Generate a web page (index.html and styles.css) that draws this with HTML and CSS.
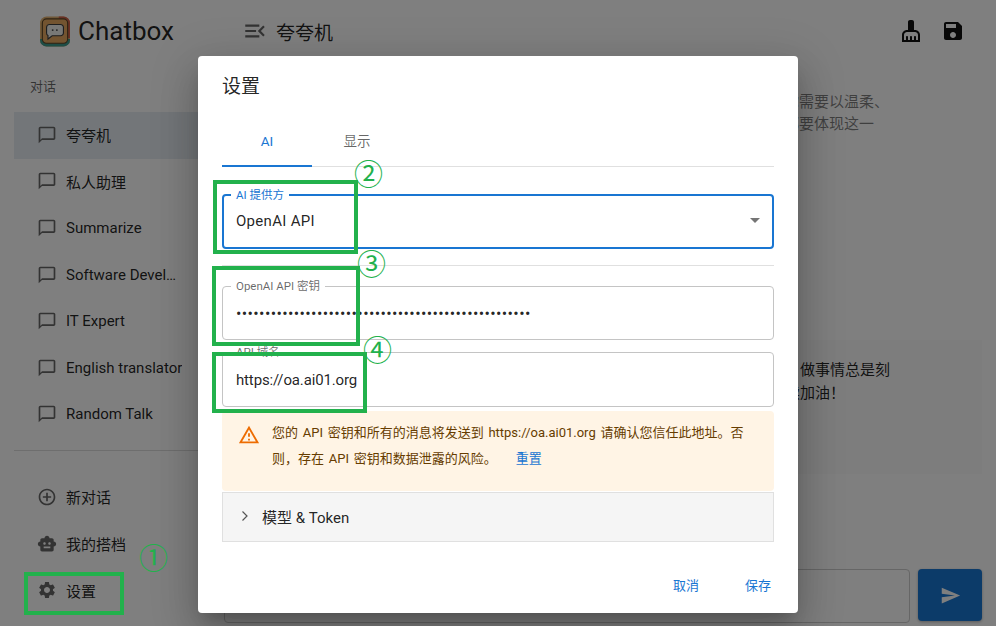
FILE: index.html
```html
<!DOCTYPE html>
<html lang="zh-CN">
  <head>
    <meta charset="UTF-8" />
    <meta name="viewport" content="width=device-width, initial-scale=1.0" />
    <title>Chatbox</title>
    <link rel="stylesheet" href="styles.css">
  </head>
  <body>
    <svg class="sprites" xmlns="http://www.w3.org/2000/svg">
      <symbol id="i-chat" viewBox="0 0 24 24"><path d="M20 2H4c-1.1 0-2 .9-2 2v18l4-4h14c1.1 0 2-.9 2-2V4c0-1.1-.9-2-2-2zm0 14H6l-2 2V4h16v12z"/></symbol>
      <symbol id="i-add" viewBox="0 0 24 24"><path d="M13 7h-2v4H7v2h4v4h2v-4h4v-2h-4V7zm-1-5C6.48 2 2 6.48 2 12s4.48 10 10 10 10-4.48 10-10S17.52 2 12 2zm0 18c-4.41 0-8-3.59-8-8s3.59-8 8-8 8 3.59 8 8-3.59 8-8 8z"/></symbol>
      <symbol id="i-bot" viewBox="0 0 24 24"><path d="M20 9V7c0-1.1-.9-2-2-2h-3c0-1.66-1.34-3-3-3S9 3.34 9 5H6c-1.1 0-2 .9-2 2v2c-1.66 0-3 1.34-3 3s1.34 3 3 3v4c0 1.1.9 2 2 2h12c1.1 0 2-.9 2-2v-4c1.66 0 3-1.34 3-3s-1.34-3-3-3zM7.5 11.5c0-.83.67-1.5 1.5-1.5s1.5.67 1.5 1.5S9.83 13 9 13s-1.5-.67-1.5-1.5zM16 17H8v-2h8v2zm-1-4c-.83 0-1.5-.67-1.5-1.5S14.17 10 15 10s1.5.67 1.5 1.5S15.83 13 15 13z"/></symbol>
      <symbol id="i-gear" viewBox="0 0 24 24"><path d="M19.14 12.94c.04-.3.06-.61.06-.94 0-.32-.02-.64-.07-.94l2.03-1.58c.18-.14.23-.41.12-.61l-1.92-3.32c-.12-.22-.37-.29-.59-.22l-2.39.96c-.5-.38-1.03-.7-1.62-.94l-.36-2.54c-.04-.24-.24-.41-.48-.41h-3.84c-.24 0-.43.17-.47.41l-.36 2.54c-.59.24-1.13.57-1.62.94l-2.39-.96c-.22-.08-.47 0-.59.22L2.74 8.87c-.12.21-.08.47.12.61l2.03 1.58c-.05.3-.09.63-.09.94s.02.64.07.94l-2.03 1.58c-.18.14-.23.41-.12.61l1.92 3.32c.12.22.37.29.59.22l2.39-.96c.5.38 1.03.7 1.62.94l.36 2.54c.05.24.24.41.48.41h3.84c.24 0 .44-.17.47-.41l.36-2.54c.59-.24 1.13-.56 1.62-.94l2.39.96c.22.08.47 0 .59-.22l1.92-3.32c.12-.22.07-.47-.12-.61l-2.01-1.58zM12 15.6c-1.98 0-3.6-1.62-3.6-3.6s1.62-3.6 3.6-3.6 3.6 1.62 3.6 3.6-1.62 3.6-3.6 3.6z"/></symbol>
    </svg>

    <div class="app">
      <aside class="sidebar">
        <div class="brand">
          <svg class="logo" viewBox="0 0 32 32">
            <rect width="32" height="32" rx="7" fill="#e0b070"/>
            <path d="M20 0h5a7 7 0 0 1 7 7v16h-4V4h-8z" fill="#d0604a"/>
            <path d="M0 24v1a7 7 0 0 0 7 7h18a7 7 0 0 0 7-7v-1z" fill="#3c9a8c"/>
            <rect x="2.500" y="2.500" width="27" height="26" rx="4.500" fill="#e6a860" stroke="#5c4526" stroke-width="1.200"/>
            <path d="M10 8.500h12a3 3 0 0 1 3 3v6a3 3 0 0 1-3 3H13l-4.500 3.500v-3.800A3 3 0 0 1 7 17.500v-6a3 3 0 0 1 3-3z" fill="#f0f0ec" stroke="#3e3e3e" stroke-width="1.200"/>
            <circle cx="13.500" cy="14.500" r="1" fill="#444"/><circle cx="18" cy="14.500" r="1" fill="#444"/>
          </svg>
          <span class="brand-name">Chatbox</span>
        </div>
        <div class="section-title">对话</div>
        <ul class="session-list">
          <li class="session selected"><svg class="icon"><use href="#i-chat"/></svg><span class="session-name">夸夸机</span></li>
          <li class="session"><svg class="icon"><use href="#i-chat"/></svg><span class="session-name">私人助理</span></li>
          <li class="session"><svg class="icon"><use href="#i-chat"/></svg><span class="session-name">Summarize</span></li>
          <li class="session"><svg class="icon"><use href="#i-chat"/></svg><span class="session-name">Software Developer</span></li>
          <li class="session"><svg class="icon"><use href="#i-chat"/></svg><span class="session-name">IT Expert</span></li>
          <li class="session"><svg class="icon"><use href="#i-chat"/></svg><span class="session-name">English translator</span></li>
          <li class="session"><svg class="icon"><use href="#i-chat"/></svg><span class="session-name">Random Talk</span></li>
        </ul>
        <hr class="side-rule" />
        <ul class="side-actions">
          <li class="session"><svg class="icon"><use href="#i-add"/></svg><span class="session-name">新对话</span></li>
          <li class="session"><svg class="icon"><use href="#i-bot"/></svg><span class="session-name">我的搭档</span></li>
          <li class="session"><svg class="icon"><use href="#i-gear"/></svg><span class="session-name">设置</span></li>
        </ul>
      </aside>

      <main class="main">
        <header class="topbar">
          <svg class="menu-icon" viewBox="0 0 24 24"><path d="M3 18h13v-2H3v2zm0-5h10v-2H3v2zm0-7v2h13V6H3zm18 9.590L17.420 12 21 8.410 19.590 7l-5 5 5 5L21 15.590z"/></svg>
          <h1 class="chat-title">夸夸机</h1>
          <div class="top-tools">
            <svg class="tool-icon" viewBox="0 0 24 24"><path d="M16 11h-1V3c0-1.100-.9-2-2-2h-2c-1.100 0-2 .9-2 2v8H8c-2.760 0-5 2.240-5 5v7h18v-7c0-2.760-2.240-5-5-5zm3 10h-2v-3c0-.55-.45-1-1-1s-1 .45-1 1v3h-2v-3c0-.55-.45-1-1-1s-1 .45-1 1v3H9v-3c0-.55-.45-1-1-1s-1 .45-1 1v3H5v-5c0-1.650 1.350-3 3-3h8c1.650 0 3 1.350 3 3v5z"/></svg>
            <svg class="tool-icon" viewBox="0 0 24 24"><path d="M17 3H5c-1.110 0-2 .9-2 2v14c0 1.100.89 2 2 2h14c1.100 0 2-.9 2-2V7l-4-4zm-5 16c-1.660 0-3-1.340-3-3s1.340-3 3-3 3 1.340 3 3-1.340 3-3 3zm3-10H5V5h10v4z"/></svg>
          </div>
        </header>
        <div class="messages">
          <div class="msg msg-system">
            <p>你需要以温柔、</p>
            <p>都要体现这一</p>
          </div>
          <div class="msg msg-reply">
            <p>，做事情总是刻</p>
            <p>续加油！</p>
          </div>
        </div>
        <div class="composer">
          <div class="composer-input"></div>
          <button class="send-btn"><svg viewBox="0 0 24 24"><path d="M2.010 21 23 12 2.010 3 2 10l15 2-15 2z"/></svg></button>
        </div>
      </main>
    </div>

    <div class="backdrop">
      <section class="dialog">
        <h2 class="dialog-title">设置</h2>
        <div class="dialog-body">
          <div class="tabs">
            <span class="tab active">AI</span>
            <span class="tab">显示</span>
          </div>
          <fieldset class="field field-focus">
            <legend>AI 提供方</legend>
            <span class="field-value">OpenAI API</span>
            <svg class="caret" viewBox="0 0 24 24"><path d="M7 10l5 5 5-5z"/></svg>
          </fieldset>
          <hr class="rule" />
          <fieldset class="field field-key">
            <legend>OpenAI API 密钥</legend>
            <span class="field-value dots">•••••••••••••••••••••••••••••••••••••••••••••••••••</span>
          </fieldset>
          <fieldset class="field field-host">
            <legend>API 域名</legend>
            <span class="field-value">https://oa.ai01.org</span>
          </fieldset>
          <div class="alert">
            <svg class="alert-icon" viewBox="0 0 24 24"><path d="M12 5.990 19.530 19H4.470L12 5.990M12 2 1 21h22L12 2zm1 14h-2v2h2v-2zm0-6h-2v4h2v-4z"/></svg>
            <p class="alert-text">您的 API 密钥和所有的消息将发送到 https://oa.ai01.org 请确认您信任此地址。否则，存在 API 密钥和数据泄露的风险。<a class="alert-link">重置</a></p>
          </div>
          <div class="accordion">
            <svg class="chevron" viewBox="0 0 12 12"><path d="M3.500 1.500 8 6l-4.500 4.500" fill="none" stroke="#555" stroke-width="1.200"/></svg>
            <span>模型 &amp; Token</span>
          </div>
        </div>
        <div class="dialog-actions">
          <a class="btn-text">取消</a>
          <a class="btn-text">保存</a>
        </div>
      </section>
    </div>

    <!-- 标注 -->
    <div class="mark mark-1"></div>
    <div class="mark mark-2"></div>
    <div class="mark mark-3"></div>
    <div class="mark mark-4"></div>
    <span class="num num-1">①</span>
    <span class="num num-2">②</span>
    <span class="num num-3">③</span>
    <span class="num num-4">④</span>
  </body>
</html>
```

FILE: styles.css
```css
* {
  margin: 0;
  padding: 0;
  box-sizing: border-box;
}

body {
  height: 626px;
  overflow: hidden;
  background: #fff;
  color: rgba(0, 0, 0, 0.87);
  font-family: Roboto, "Noto Sans CJK SC", sans-serif;
  font-size: 14px;
}

ul {
  list-style: none;
}

.sprites {
  display: none;
}

.app {
  display: flex;
  height: 626px;
}

/* sidebar */
.sidebar {
  width: 224px;
  flex: none;
  padding: 0 0 0 14px;
  display: flex;
  flex-direction: column;
}

.brand {
  display: flex;
  align-items: center;
  gap: 8px;
  height: 62px;
  padding-left: 26px;
}

.logo {
  width: 30px;
  height: 31px;
}

.brand-name {
  font-size: 26px;
  line-height: 30px;
}

.section-title {
  margin-top: 16px;
  padding-left: 16px;
  height: 34px;
  line-height: 18px;
  font-size: 13px;
  color: rgba(0, 0, 0, 0.6);
}

.session {
  display: flex;
  align-items: center;
  height: 46.600px;
  padding: 0 0 1px 23px;
  font-size: 15px;
  color: rgba(0, 0, 0, 0.87);
}

.session.selected {
  background: #e6ecf2;
}

.icon {
  width: 20px;
  height: 20px;
  flex: none;
  fill: #666;
  margin-right: 9px;
}

.session-name {
  max-width: 118px;
  white-space: nowrap;
  overflow: hidden;
  text-overflow: ellipsis;
}

.side-rule {
  border: 0;
  border-top: 1px solid #ddd;
  margin-top: 12px;
  margin-bottom: 23px;
}

/* main */
.main {
  flex: 1;
  min-width: 0;
  display: flex;
  flex-direction: column;
  padding: 0 14px 0 0;
}

.topbar {
  display: flex;
  align-items: center;
  height: 62px;
  padding-left: 18px;
}

.menu-icon {
  width: 26px;
  height: 26px;
  fill: #666;
  margin-right: 8px;
}

.chat-title {
  font-size: 19px;
  font-weight: 400;
}

.top-tools {
  margin-left: auto;
  display: flex;
  gap: 18px;
  padding-right: 17px;
}

.tool-icon {
  width: 24px;
  height: 24px;
  fill: #111;
}

.messages {
  flex: 1;
  font-size: 15px;
  line-height: 22px;
  padding-top: 29px;
}

.msg-system {
  padding-left: 560px;
  color: rgba(0, 0, 0, 0.5);
  white-space: nowrap;
}

.msg-reply {
  margin-top: 205px;
  height: 134px;
  line-height: 23px;
  padding: 19px 0 0 561px;
  background: #fafafa;
  white-space: nowrap;
}

.composer {
  display: flex;
  gap: 8px;
  height: 57px;
}

.composer-input {
  flex: 1;
  height: 54px;
  border: 1px solid #ccc;
  border-radius: 4px;
}

.send-btn {
  width: 64px;
  height: 52px;
  border: 0;
  border-radius: 4px;
  background: #1976d2;
  box-shadow: 0 1px 3px rgba(0, 0, 0, 0.3);
  display: flex;
  align-items: center;
  justify-content: center;
}

.send-btn svg {
  width: 21px;
  height: 21px;
  fill: #fff;
}

/* dialog */
.backdrop {
  position: absolute;
  inset: 0;
  background: rgba(0, 0, 0, 0.5);
  display: flex;
  justify-content: center;
  align-items: flex-start;
  padding-top: 56px;
}

.dialog {
  width: 600px;
  height: 557px;
  background: #fff;
  border-radius: 4px;
  display: flex;
  flex-direction: column;
  box-shadow: 0 11px 15px -7px rgba(0, 0, 0, 0.2), 0 24px 38px 3px rgba(0, 0, 0, 0.14), 0 9px 46px 8px rgba(0, 0, 0, 0.12);
}

.dialog-title {
  font-size: 19px;
  font-weight: 400;
  line-height: 26px;
  padding: 18px 24px 0;
}

.dialog-body {
  flex: 1;
  padding: 19px 24px 0;
}

.tabs {
  display: flex;
  height: 48px;
  border-bottom: 1px solid #e0e0e0;
}

.tab {
  width: 90px;
  display: flex;
  align-items: center;
  justify-content: center;
  padding-bottom: 5px;
  color: rgba(0, 0, 0, 0.6);
  font-size: 13.500px;
}

.tab.active {
  color: #1976d2;
  border-bottom: 2px solid #1976d2;
  height: 48px;
  padding-bottom: 3px;
}

.field {
  position: relative;
  display: flex;
  align-items: center;
  padding: 0 13px;
  border: 1px solid #c4c4c4;
  border-radius: 4px;
}

.field legend {
  font-size: 11.500px;
  line-height: 12px;
  padding: 0 5px;
  margin-left: -5px;
  color: rgba(0, 0, 0, 0.6);
  white-space: nowrap;
}

.field-focus {
  margin-top: 22px;
  height: 60px;
  border: 2px solid #1976d2;
  padding: 0 12px 6px;
}

.field-focus legend {
  color: #1976d2;
}

.field-focus .field-value {
  letter-spacing: 0.3px;
}

.field-key {
  margin-top: 14px;
  height: 60px;
  padding-bottom: 4px;
}

.field-host {
  margin-top: 6px;
  height: 61px;
  padding-bottom: 4px;
}

.field-host .field-value {
  letter-spacing: -0.15px;
}

.field-value {
  font-size: 15px;
  line-height: 22px;
  white-space: nowrap;
}

.dots {
  font-size: 16px;
  letter-spacing: 0.38px;
}

.caret {
  position: absolute;
  right: 5px;
  top: 7px;
  width: 24px;
  height: 24px;
  fill: #757575;
}

.rule {
  border: 0;
  border-top: 1px solid #e0e0e0;
  margin-top: 16px;
}

.alert {
  margin-top: 4px;
  height: 80px;
  display: flex;
  gap: 12px;
  padding: 12px 16px;
  background: #fff4e5;
  border-radius: 4px;
  color: #663c00;
}

.alert-icon {
  width: 22px;
  height: 22px;
  flex: none;
  fill: #ed6c02;
  margin-top: 1px;
}

.alert-text {
  font-size: 13px;
  line-height: 26px;
  word-spacing: 1.500px;
  width: 478px;
  margin-top: -3px;
}

.alert-link {
  color: #1976d2;
  margin-left: 19px;
}

.accordion {
  margin-top: 1px;
  height: 50px;
  display: flex;
  align-items: center;
  gap: 11px;
  padding: 0 0 2px 16px;
  background: #f5f5f5;
  border: 1px solid #e0e0e0;
  font-size: 15px;
  color: rgba(0, 0, 0, 0.87);
}

.chevron {
  width: 12px;
  height: 12px;
}

.dialog-actions {
  display: flex;
  justify-content: flex-end;
  gap: 46px;
  padding: 0 27px 17px 0;
}

.btn-text {
  color: #1976d2;
  font-size: 13px;
  line-height: 20px;
}

/* annotations */
.mark {
  position: absolute;
  border: 4px solid #22b14c;
}

.mark-1 { left: 24px; top: 572px; width: 100px; height: 43px; }
.mark-2 { left: 213px; top: 180px; width: 145px; height: 74px; }
.mark-3 { left: 212px; top: 266px; width: 148px; height: 80px; }
.mark-4 { left: 212px; top: 352px; width: 155px; height: 61px; }

.num {
  position: absolute;
  font-family: "Noto Sans CJK SC", sans-serif;
  font-size: 29px;
  line-height: 30px;
  color: #22b14c;
}

.num-1 { left: 139px; top: 541px; }
.num-2 { left: 354px; top: 157px; }
.num-3 { left: 357px; top: 247px; }
.num-4 { left: 363px; top: 333px; }
```
